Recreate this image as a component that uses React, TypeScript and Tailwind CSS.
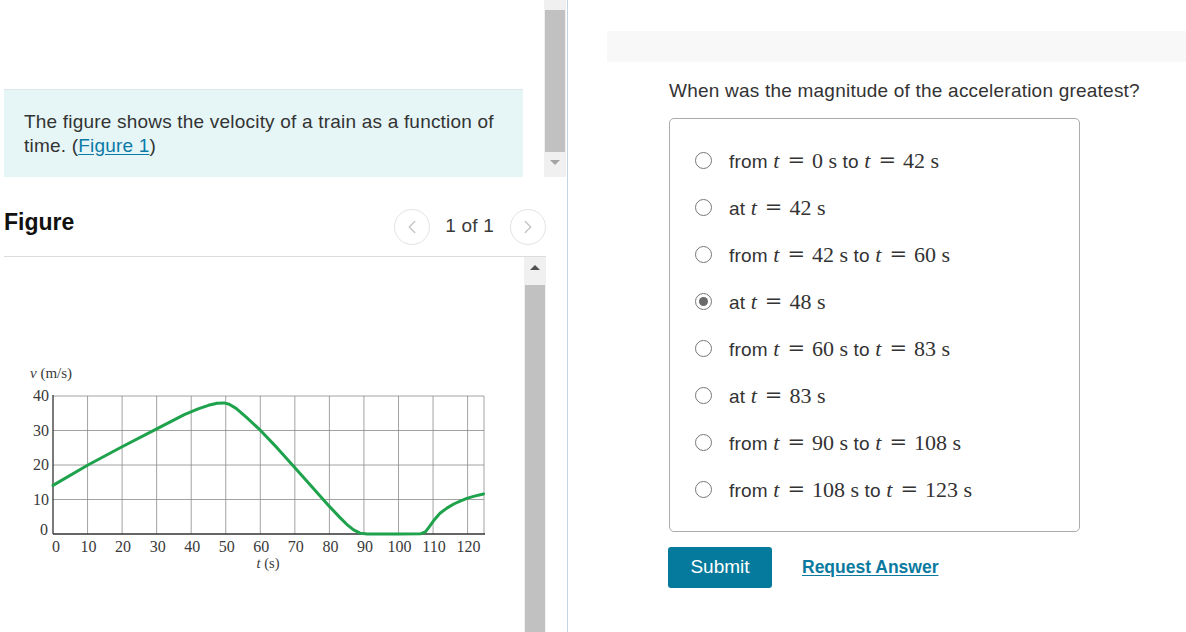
import React from "react";
import { ChevronLeft, ChevronRight } from "lucide-react";

const X = (t: number) => 53 + t * 3.455;
const Y = (v: number) => 534 - v * 3.45;

const curve: [number, number][] = [
  [0, 14.1], [10, 19.9], [20, 25.3], [30, 30.5], [38, 34.6], [42, 36.3], [45, 37.3], [47.5, 37.9], [49.5, 38], [51, 37.6], [53, 36.4], [56, 33.8], [60, 30.1], [65, 24.8], [70, 19.2], [75, 13.6], [80, 8.0], [83, 4.8], [85, 2.8], [87, 1.2], [89, 0.2], [91, 0], [100, 0], [106.5, 0.1], [107.8, 0.6], [109, 2.2], [110.5, 4.3], [112, 6.0], [114, 7.5], [116, 8.7], [118, 9.6], [120, 10.4], [122, 11.0], [124.6, 11.6],
];

function Chart() {
  const pts = curve.map(([t, v]) => `${X(t).toFixed(1)},${Y(v).toFixed(1)}`).join(" ");
  const vx = Array.from({ length: 12 }, (_, i) => (i + 1) * 10);
  const hy = [10, 20, 30, 40];
  return (
    <svg width="520" height="260" viewBox="4 350 520 260" className="block mt-[93px]">
      {vx.map((t) => (
        <line key={t} x1={X(t)} y1={Y(40)} x2={X(t)} y2={Y(0)} stroke="#8a8a8a" strokeWidth="0.8" />
      ))}
      <line x1={484} y1={Y(40)} x2={484} y2={Y(0)} stroke="#8a8a8a" strokeWidth="0.8" />
      {hy.map((v) => (
        <line key={v} x1={X(0)} y1={Y(v)} x2={484} y2={Y(v)} stroke="#8a8a8a" strokeWidth="0.8" />
      ))}
      <line x1={X(0)} y1={Y(40) - 1} x2={X(0)} y2={Y(0)} stroke="#333" strokeWidth="1.3" />
      <line x1={X(0)} y1={Y(0)} x2={485} y2={Y(0)} stroke="#333" strokeWidth="1.3" />
      <polyline points={pts} fill="none" stroke="#1ea24c" strokeWidth="3" strokeLinejoin="round" strokeLinecap="round" />
      <g fontFamily="'Liberation Serif', serif" fontSize="16" fill="#3a3a3a">
        <text x="30" y="378" fontSize="15">
          <tspan fontStyle="italic">v</tspan> (m/s)
        </text>
        {[40, 30, 20, 10].map((v) => (
          <text key={v} x="49" y={Y(v) + 5} textAnchor="end">
            {v}
          </text>
        ))}
        <text x="48" y={Y(0) + 1} textAnchor="end">0</text>
        {[0, ...vx].map((t) => (
          <text key={t} x={t === 0 ? 56 : X(t) + 1} y="552" textAnchor="middle">
            {t}
          </text>
        ))}
        <text x="268" y="568" textAnchor="middle" fontSize="14.5">
          <tspan fontStyle="italic">t</tspan> (s)
        </text>
      </g>
    </svg>
  );
}

function Eq() {
  return (
    <span className="inline-block mx-[7px] font-['DejaVu_Serif',serif] text-[21px] align-[1px]">=</span>
  );
}

function T() {
  return <i className="mr-[1px]">t</i>;
}

const mathCls = "font-['Liberation_Serif',serif] text-[22px] tracking-normal";

function Range({ a, b }: { a: string; b: string }) {
  return (
    <>
      <span>from </span>
      <span className={mathCls}>
        <T />
        <Eq />
        {a}&nbsp;s
      </span>
      <span> to </span>
      <span className={mathCls}>
        <T />
        <Eq />
        {b}&nbsp;s
      </span>
    </>
  );
}

function At({ a }: { a: string }) {
  return (
    <>
      <span>at </span>
      <span className={mathCls}>
        <T />
        <Eq />
        {a}&nbsp;s
      </span>
    </>
  );
}

function Radio({ checked }: { checked?: boolean }) {
  return (
    <span className="w-[17px] h-[17px] rounded-full border-[1.5px] border-[#777] flex items-center justify-center shrink-0 bg-white">
      {checked && <span className="w-[9px] h-[9px] rounded-full bg-[#6a6a6a]" />}
    </span>
  );
}

export default function App() {
  const options: { el: React.ReactNode; checked?: boolean }[] = [
    { el: <Range a="0" b="42" /> },
    { el: <At a="42" /> },
    { el: <Range a="42" b="60" /> },
    { el: <At a="48" />, checked: true },
    { el: <Range a="60" b="83" /> },
    { el: <At a="83" /> },
    { el: <Range a="90" b="108" /> },
    { el: <Range a="108" b="123" /> },
  ];
  return (
    <div className="w-[1186px] h-[632px] flex bg-white overflow-hidden font-['Liberation_Sans',Arial,sans-serif] text-[#333]">
      {/* left pane */}
      <div className="w-[568px] h-full border-r border-[#c3d3e3] flex flex-col shrink-0">
        <div className="h-[177px] flex shrink-0">
          <div className="w-[544px] pl-[4px] pt-[89px]">
            <div className="w-[519px] h-[88px] bg-[#e6f6f7] border-t border-[#dde6e8] px-[20px] pt-[20px] text-[19px] tracking-[0.2px] leading-[24px] text-[#333]">
              {"The figure shows the velocity of a train as a function of time. ("}
              <span className="text-[#0b7aa6] underline underline-offset-[2px]">Figure 1</span>
              {")"}
            </div>
          </div>
          <div className="w-[22px] h-full bg-[#f0f0f0] flex flex-col items-center">
            <div className="w-[20px] h-[142px] mt-[10px] bg-[#c1c1c1]" />
            <div className="mt-[8px] w-0 h-0 border-l-[5px] border-r-[5px] border-t-[5px] border-l-transparent border-r-transparent border-t-[#a3a3a3]" />
          </div>
        </div>
        <div className="ml-[4px] w-[542px] h-[80px] border-b border-[#dcdcdc] flex items-center justify-between pt-[12px] shrink-0">
          <div className="text-[23px] font-bold text-[#111]">Figure</div>
          <div className="flex items-center mt-[8px]">
            <span className="w-[36px] h-[36px] rounded-full border border-[#e3e3e3] flex items-center justify-center">
              <ChevronLeft size={22} strokeWidth={1.5} color="#c4c4c4" />
            </span>
            <span className="ml-[15px] mr-[16px] text-[19px] tracking-[0.2px] text-[#3a3a3a]">1 of 1</span>
            <span className="w-[36px] h-[36px] rounded-full border border-[#e3e3e3] flex items-center justify-center">
              <ChevronRight size={22} strokeWidth={1.5} color="#c4c4c4" />
            </span>
          </div>
        </div>
        <div className="flex flex-1 min-h-0">
          <div className="w-[520px] ml-[4px]">
            <Chart />
          </div>
          <div className="w-[22px] h-full bg-[#f0f0f0] flex flex-col items-center">
            <div className="mt-[8px] w-0 h-0 border-l-[5px] border-r-[5px] border-b-[5px] border-l-transparent border-r-transparent border-b-[#505050]" />
            <div className="w-[20px] flex-1 mt-[15px] bg-[#c1c1c1]" />
          </div>
        </div>
      </div>
      {/* right pane */}
      <div className="flex-1 flex flex-col">
        <div className="ml-[39px] mt-[31px] h-[31px] bg-[#f8f8f8]" />
        <div className="ml-[101px] mt-[17px] text-[19px] tracking-[0.22px] leading-[24px] text-[#333]">
          When was the magnitude of the acceleration greatest?
        </div>
        <div className="ml-[101px] mt-[15px] w-[411px] rounded-[5px] border border-[#ababab] py-[18px]">
          {options.map((o, i) => (
            <div key={i} className="h-[47px] flex items-center pl-[25px] text-[19px] tracking-[0.2px] text-[#333]">
              <Radio checked={o.checked} />
              <span className="ml-[17px] whitespace-nowrap">{o.el}</span>
            </div>
          ))}
        </div>
        <div className="ml-[100px] mt-[15px] flex items-center">
          <button className="w-[104px] h-[41px] rounded-[3px] bg-[#057a9c] text-white text-[19px]">Submit</button>
          <span className="ml-[30px] text-[17.5px] font-bold text-[#0b7aa0] underline underline-offset-[2px]">Request Answer</span>
        </div>
      </div>
    </div>
  );
}
